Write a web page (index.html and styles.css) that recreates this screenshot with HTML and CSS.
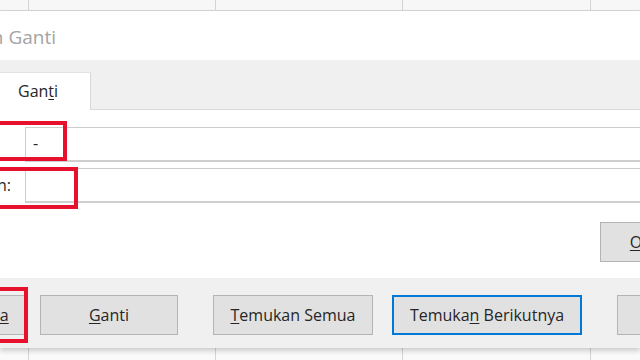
FILE: index.html
```html
<!DOCTYPE html>
<html lang="id">
<head>
    <meta charset="UTF-8">
    <meta name="viewport" content="width=device-width, initial-scale=1.0">
    <link rel="stylesheet" href="styles.css">
</head>
<body>
    <div class="sheet sheet-top">
        <div class="cell c1"></div>
        <div class="cell c2"></div>
        <div class="cell c2"></div>
        <div class="cell c3"></div>
        <div class="cell"></div>
    </div>

    <div class="dialog">
        <div class="dialog-title">
            <div class="clip-left title-clip"><span>Temukan dan Ganti</span></div>
        </div>

        <div class="tabs">
            <div class="tab active">Gan<u>t</u>i</div>
        </div>

        <div class="panel">
            <div class="field-row">
                <div class="label"></div>
                <div class="input">-</div>
                <div class="mark mark-find"></div>
            </div>
            <div class="field-row">
                <div class="label"><div class="clip-left label-clip"><span>Ganti dengan:</span></div></div>
                <div class="input"></div>
                <div class="mark mark-replace"></div>
            </div>
            <div class="options-row">
                <button class="btn btn-options"><u>O</u>psi &gt;&gt;</button>
            </div>
        </div>

        <div class="footer">
            <div class="clip-left first-clip">
                <button class="btn btn-all">G<u>a</u>nti Semu<u>a</u></button>
            </div>
            <button class="btn btn-replace"><u>G</u>anti</button>
            <button class="btn btn-findall"><u>T</u>emukan Semua</button>
            <button class="btn btn-next">Temuka<u>n</u> Berikutnya</button>
            <button class="btn btn-close">Tutup</button>
            <div class="mark mark-all"></div>
        </div>
    </div>

    <div class="sheet sheet-bottom">
        <div class="cell c1"></div>
        <div class="cell c2"></div>
        <div class="cell c2"></div>
        <div class="cell c3"></div>
        <div class="cell"></div>
    </div>
</body>
</html>
```

FILE: styles.css
```css
body {
    font-family: 'Open Sans', 'Noto Sans', sans-serif;
    margin: 0;
    padding: 0;
    width: 640px;
    height: 360px;
    overflow: hidden;
    background: #ffffff;
    color: #262626;
}
u {
    text-decoration-thickness: 1px;
    text-underline-offset: 2px;
}
.clip-left {
    display: flex;
    justify-content: flex-end;
    overflow: hidden;
    white-space: nowrap;
    flex-shrink: 0;
}

/* spreadsheet behind the dialog */
.sheet {
    display: flex;
    background: #f7f7f7;
}
.sheet-top {
    height: 10px;
    border-bottom: 1px solid #d6d6d6;
}
.sheet-bottom {
    height: 12px;
    background: #fafafa;
}
.cell {
    box-sizing: border-box;
    border-right: 1px solid #d4d4d4;
    flex-shrink: 0;
}
.cell:last-child {
    border-right: none;
    flex: 1;
}
.c1 { width: 29px; }
.c2 { width: 187px; }
.c3 { width: 188px; }

/* dialog */
.dialog {
    background: #ffffff;
    box-shadow: 0 3px 5px rgba(0, 0, 0, 0.18);
    position: relative;
}
.dialog-title {
    height: 49px;
    box-sizing: border-box;
    padding-top: 13px;
}
.title-clip {
    width: 56px;
    font-size: 19px;
    line-height: 26px;
    color: #a3a3a3;
}
.tabs {
    height: 50px;
    box-sizing: border-box;
    background: #f0f0f0;
    border-bottom: 1px solid #dadada;
    padding-top: 12px;
    display: flex;
}
.tab {
    height: 38px;
    box-sizing: border-box;
    font-size: 16px;
    line-height: 36px;
}
.tab.active {
    width: 91px;
    padding-left: 18px;
    background: #ffffff;
    border-top: 1px solid #e2e2e2;
    border-right: 1px solid #d6d6d6;
}
.panel {
    padding-top: 17px;
    padding-bottom: 16px;
    display: flex;
    flex-direction: column;
    gap: 6px;
}
.field-row {
    display: flex;
    position: relative;
    height: 35px;
    margin-right: -10px;
}
.label {
    width: 25px;
    font-size: 16px;
    line-height: 35px;
    flex-shrink: 0;
}
.label-clip {
    width: 11px;
}
.input {
    flex: 1;
    box-sizing: border-box;
    border: 1px solid #cdcdcd;
    border-bottom: 2px solid #cfcfcf;
    font-size: 16px;
    line-height: 31px;
    padding-left: 7px;
}
.options-row {
    display: flex;
    justify-content: flex-end;
    margin-top: 13px;
    margin-right: -76px;
}

/* red highlight boxes */
.mark {
    position: absolute;
    border: 4px solid #e8112d;
    box-sizing: border-box;
}
.mark-find {
    top: -6px;
    left: -10px;
    width: 77px;
    height: 40px;
}
.mark-replace {
    top: -1px;
    left: -10px;
    width: 88px;
    height: 42px;
}
.mark-all {
    top: 9px;
    left: -10px;
    width: 38px;
    height: 56px;
}

/* buttons */
.btn {
    font-family: 'Open Sans', 'Noto Sans', sans-serif;
    font-size: 16px;
    color: #262626;
    background: #e1e1e1;
    border: 1px solid #b4b4b4;
    height: 40px;
    padding: 0;
    flex-shrink: 0;
    box-sizing: border-box;
}
.btn-options {
    width: 116px;
}
.footer {
    position: relative;
    height: 70px;
    box-sizing: border-box;
    background: #f0f0f0;
    display: flex;
    align-items: center;
    padding-top: 4px;
}
.first-clip {
    width: 26px;
}
.btn-all {
    width: 130px;
}
.btn-replace {
    width: 138px;
    margin-left: 14px;
}
.btn-findall {
    width: 160px;
    margin-left: 35px;
}
.btn-next {
    width: 190px;
    margin-left: 19px;
    border: 2px solid #0078d7;
}
.btn-close {
    width: 100px;
    margin-left: 35px;
}
```
